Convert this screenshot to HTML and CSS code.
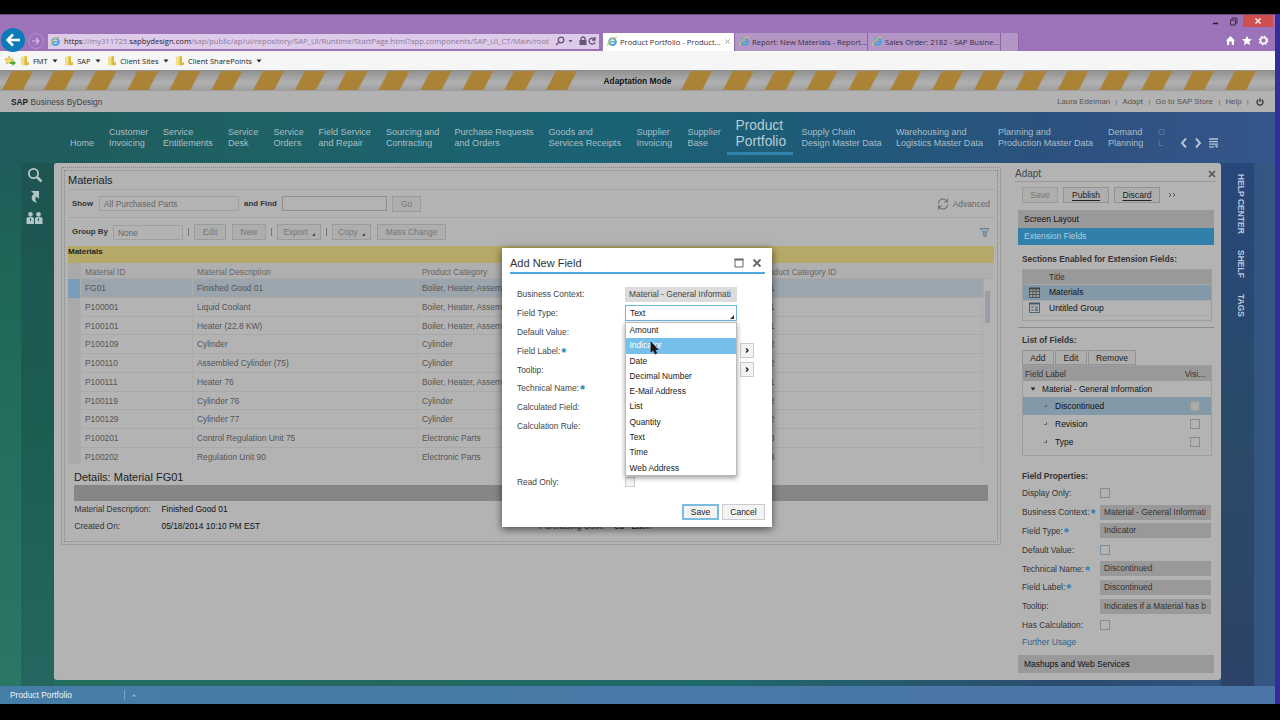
FILE: index.html
```html
<!DOCTYPE html>
<html lang="en">
<head>
  <meta charset="UTF-8">
  <title>Product Portfolio - Product Data - SAP Business ByDesign</title>
  <link rel="stylesheet" href="styles.css">
</head>
<body>
  <svg class="defs" width="0" height="0">
    <symbol id="ie" viewBox="0 0 12 12">
      <circle cx="6" cy="6.2" r="3.7" fill="none" stroke="#45a3dc" stroke-width="2"/>
      <path d="M3 6.4h7" stroke="#45a3dc" stroke-width="1.5"/>
      <path d="M1.2 10.8C-.5 8 6 .6 11 1.2" fill="none" stroke="#d9c84b" stroke-width="1.2"/>
    </symbol>
    <symbol id="folder" viewBox="0 0 10 11">
      <path d="M1 2l4-1v9l-4 .5z" fill="#f3df86"/>
      <path d="M4.500 1.500L7 1v6l2 .5V10l-4.500.500z" fill="#dcb93f"/>
    </symbol>
    <symbol id="down" viewBox="0 0 6 4"><path d="M.5.5h5L3 3.500z" fill="#222"/></symbol>
  </svg>

  <div class="window">
    <div class="titlebar">
      <svg class="win-min" width="6" height="9"><path d="M0 7.500h5" stroke="#222" stroke-width="1.500"/></svg>
      <svg class="win-max" width="8" height="9"><path d="M.5 3h5v5h-5zM2 3V1h5v5H5.500" fill="none" stroke="#3c2b49"/></svg>
      <span class="win-close"><svg width="6" height="6"><path d="M.5.5l5 5m0-5l-5 5" stroke="#fff" stroke-width="1.300"/></svg></span>
    </div>
    <div class="address-row">
      <span class="back"><svg width="16" height="14"><path d="M15 7H3M8 1.500L2.500 7 8 12.500" fill="none" stroke="#fff" stroke-width="2.500"/></svg></span>
      <span class="forward"><svg width="8" height="8"><path d="M0 4h7M4 1l3 3-3 3" fill="none" stroke="#d8bfe8" stroke-width="1.200"/></svg></span>
      <div class="url">
        <svg width="11" height="11"><use href="#ie"/></svg>
        <span class="url-text"><b>https</b>://my311725.<b>sapbydesign.com</b>/sap/public/ap/ui/repository/SAP_UI/Runtime/StartPage.html?app.components/SAP_UI_CT/Main/root</span>
        <svg class="url-icons" width="42" height="10">
          <g fill="none" stroke="#675476" stroke-width="1.300">
            <circle cx="6" cy="4" r="2.800"/><path d="M4 6L1 9"/>
            <path d="M39.500 3.200A3 3 0 1 0 40 6M40 1v3h-3"/>
            <path d="M26 4V3a2 2 0 0 1 4 0v1"/>
          </g>
          <path d="M13.500 4h4l-2 2.500zM24.500 4h7v5h-7z" fill="#675476"/>
        </svg>
      </div>
      <div class="tab active"><svg width="11" height="11"><use href="#ie"/></svg><span>Product Portfolio - Product...</span><svg class="tab-x" width="5" height="5"><path d="M.5.5l4 4m0-4l-4 4" stroke="#999"/></svg></div>
      <div class="tab report"><svg width="11" height="11"><use href="#ie"/></svg><span>Report: New Materials - Report...</span></div>
      <div class="tab order"><svg width="11" height="11"><use href="#ie"/></svg><span>Sales Order: 2182 - SAP Busine...</span></div>
      <div class="tab new-tab"></div>
      <svg class="chrome-tools" width="44" height="11">
        <path d="M0 5.500L4.500 1 9 5.500H8V10H5.800V6.500H3.200V10H1V5.500z" fill="#fff"/>
        <path d="M21 .8l1.500 3.200 3.500.3-2.700 2.300.9 3.600L21 8.300l-3.200 1.900.9-3.600L16 4.300l3.500-.3z" fill="#fff"/>
        <circle cx="37.500" cy="5.500" r="3" fill="none" stroke="#fff" stroke-width="1.600"/>
        <circle cx="37.500" cy="5.500" r="4.200" fill="none" stroke="#fff" stroke-width="1.300" stroke-dasharray="1.650 1.650"/>
      </svg>
    </div>
    <div class="favorites">
      <svg class="fav-star" width="12" height="11"><path d="M5 1l1.200 2.800 3 .3-2.300 2 .7 3L5 7.600 2.200 9.100l.8-3-2.300-2 3-.3z" fill="#f3dc62" stroke="#c8a12e" stroke-width=".6"/><path d="M6 7h2.500V5L12 8l-3.500 3V9H6z" fill="#55a62e"/></svg>
      <svg width="10" height="11"><use href="#folder"/></svg><span>FMT</span><svg class="caret" width="6" height="4"><use href="#down"/></svg>
      <svg width="10" height="11"><use href="#folder"/></svg><span>SAP</span><svg class="caret" width="6" height="4"><use href="#down"/></svg>
      <svg width="10" height="11"><use href="#folder"/></svg><span>Client Sites</span><svg class="caret" width="6" height="4"><use href="#down"/></svg>
      <svg width="10" height="11"><use href="#folder"/></svg><span>Client SharePoints</span><svg class="caret" width="6" height="4"><use href="#down"/></svg>
    </div>

    <div class="app">
      <div class="adaptation">
        <svg width="588" height="19">
          <defs><pattern id="stripe" width="41.850" height="19" patternUnits="userSpaceOnUse"><path d="M2 19L12 0h21L23 19z" fill="#aa8337"/></pattern></defs>
          <rect width="588" height="19" fill="url(#stripe)"/>
        </svg>
        <b>Adaptation Mode</b>
        <svg width="596" height="19"><rect width="580" height="19" fill="url(#stripe)"/></svg>
      </div>
      <div class="header">
        <span class="brand"><b>SAP</b> Business ByDesign</span>
        <span class="links"><span>Laura Edelman</span><i>|</i><span>Adapt</span><i>|</i><span>Go to SAP Store</span><i>|</i><span>Help</span><i>|</i></span>
        <svg width="8" height="8"><path d="M2.300 1.700a3 3 0 1 0 3.400 0M4 .3V4" fill="none" stroke="#333" stroke-width="1.300"/></svg>
      </div>
      <div class="nav">
        <span>Home</span>
        <span>Customer<br>Invoicing</span>
        <span>Service<br>Entitlements</span>
        <span>Service<br>Desk</span>
        <span>Service<br>Orders</span>
        <span>Field Service<br>and Repair</span>
        <span>Sourcing and<br>Contracting</span>
        <span>Purchase Requests<br>and Orders</span>
        <span>Goods and<br>Services Receipts</span>
        <span>Supplier<br>Invoicing</span>
        <span>Supplier<br>Base</span>
        <span class="current">Product<br>Portfolio</span>
        <span>Supply Chain<br>Design Master Data</span>
        <span>Warehousing and<br>Logistics Master Data</span>
        <span>Planning and<br>Production Master Data</span>
        <span>Demand<br>Planning</span>
        <span class="cut">O<br>L</span>
        <svg width="40" height="12"><path d="M6 1.500L2 6l4 4.500M16 1.500L20 6l-4 4.500" fill="none" stroke="#b5c3d3" stroke-width="2"/><path d="M29 2h9M29 4.600h9M29 7.200h9M29 9.800h5" stroke="#b5c3d3" stroke-width="1.300"/><path d="M34.500 8.500h4l-2 2.500z" fill="#b5c3d3"/></svg>
      </div>

      <div class="body">
        <div class="left-rail">
          <svg width="16" height="16"><circle cx="6.500" cy="6.500" r="4.600" fill="none" stroke="#b3c6c6" stroke-width="1.800"/><path d="M10 10l4.500 4.500" stroke="#b3c6c6" stroke-width="2.500"/></svg>
          <svg width="12" height="14"><path d="M2 1h8v8L7.500 6.500Q5 9 8 13 1 11 3 6 4 4.500 5 4z" fill="#b3c6c6"/></svg>
          <svg width="17" height="14"><g fill="#b3c6c6"><circle cx="4.500" cy="3.200" r="2.300"/><circle cx="12.500" cy="3.200" r="2.300"/><path d="M.5 7Q4.500 4.500 8 7v6H.500zM9 7q4-2.500 7.500 0v6H9z"/></g><path d="M4.500 7v3M12.500 7v3" stroke="#245f5a"/></svg>
        </div>

        <div class="panel">
          <div class="main">
            <div class="frame"><div class="frame-inner">
              <h1>Materials</h1>
              <div class="find-row">
                <b class="show">Show</b><span class="input wide">All Purchased Parts</span>
                <b class="find">and Find</b><span class="input search"></span><span class="btn off go">Go</span>
                <span class="advanced"><svg width="12" height="12"><path d="M1.500 5.500A4.500 4.500 0 0 1 10 3.500M10.500 6.500A4.500 4.500 0 0 1 2 8.500M10.500.5v3.500H7M1.500 11.500V8H5" fill="none" stroke="#737373" stroke-width="1.200"/></svg>Advanced</span>
              </div>
              <div class="toolbar">
                <b>Group By</b><span class="input group">None</span><i></i>
                <span class="btn off edit">Edit</span><span class="btn off new">New</span><i></i>
                <span class="btn off export">Export<em></em></span><i></i>
                <span class="btn off copy">Copy<em></em></span><span class="btn off mass">Mass Change</span>
                <svg class="filter" width="11" height="11"><path d="M1 1.500h9L7 6v4L4.500 8.500V6z" fill="#8496a5" stroke="#68808f"/><path d="M2 3h7" stroke="#a9bac5"/></svg>
              </div>
              <div class="section-bar">Materials</div>
              <div class="table">
                <div class="tr th"><span></span><span>Material ID</span><span>Material Description</span><span>Product Category</span><span>Product Category ID</span></div>
                <div class="tr selected"><span></span><span>FG01</span><span>Finished Good 01</span><span>Boiler, Heater, Assemblies</span><span>101</span></div>
                <div class="tr"><span></span><span>P100001</span><span>Liquid Coolant</span><span>Boiler, Heater, Assemblies</span><span>101</span></div>
                <div class="tr"><span></span><span>P100101</span><span>Heater (22.8 KW)</span><span>Boiler, Heater, Assemblies</span><span>101</span></div>
                <div class="tr"><span></span><span>P100109</span><span>Cylinder</span><span>Cylinder</span><span>102</span></div>
                <div class="tr"><span></span><span>P100110</span><span>Assembled Cylinder (75)</span><span>Cylinder</span><span>102</span></div>
                <div class="tr"><span></span><span>P100111</span><span>Heater 76</span><span>Boiler, Heater, Assemblies</span><span>101</span></div>
                <div class="tr"><span></span><span>P100119</span><span>Cylinder 76</span><span>Cylinder</span><span>102</span></div>
                <div class="tr"><span></span><span>P100129</span><span>Cylinder 77</span><span>Cylinder</span><span>102</span></div>
                <div class="tr"><span></span><span>P100201</span><span>Control Regulation Unit 75</span><span>Electronic Parts</span><span>103</span></div>
                <div class="tr"><span></span><span>P100202</span><span>Regulation Unit 90</span><span>Electronic Parts</span><span>103</span></div>
                <div class="scroll"></div>
              </div>
              <h1 class="details-title">Details: Material FG01</h1>
              <div class="details-bar"></div>
              <div class="details">
                <span>Material Description:</span><span class="value">Finished Good 01</span><span></span><span></span>
                <span>Created On:</span><span class="value">05/18/2014 10:10 PM EST</span><span>Purchasing UoM:</span><span class="value">ea - Each</span>
              </div>
            </div></div>
          </div>

          <div class="adapt">
            <div class="adapt-head"><span>Adapt</span><svg width="8" height="8"><path d="M1 1l6 6m0-6L1 7" stroke="#555" stroke-width="1.600"/></svg></div>
            <div class="adapt-buttons"><span class="btn off">Save</span><span class="btn"><u>Publish</u></span><span class="btn"><u>Discard</u></span><svg width="9" height="7"><path d="M1 1l2 2-2 2M5 1l2 2-2 2" fill="none" stroke="#555"/></svg></div>
            <div class="bar">Screen Layout</div>
            <div class="bar bar-on">Extension Fields</div>
            <h2 class="sections-title">Sections Enabled for Extension Fields:</h2>
            <div class="sections">
              <div class="sec-head"><span></span><span>Title</span></div>
              <div class="sec-on"><span><svg width="11" height="11"><path d="M.5 1.500h10v9H.500zM.500 4.500h10M.500 7.500h10M4 3v7.500M7 3v7.500" fill="#a2a2a2" stroke="#4b5258"/><path d="M0 1.500h11" stroke="#444" stroke-width="2"/></svg></span><span>Materials</span></div>
              <div><span><svg width="11" height="11"><path d="M.5 1.500h10v9H.500z" fill="none" stroke="#4b6472"/><path d="M0 1.500h11" stroke="#3f5966" stroke-width="2"/><path d="M2 5h3M2 8h3M6 5h3M6 7h3M6 8.500h3" stroke="#356985"/></svg></span><span>Untitled Group</span></div>
            </div>
            <div class="rule"></div>
            <h2 class="list-title">List of Fields:</h2>
            <div class="field-buttons"><span class="btn">Add</span><span class="btn">Edit</span><span class="btn">Remove</span></div>
            <div class="fields">
              <div class="f-head"><span>Field Label</span><span class="visi">Visi...</span></div>
              <div class="f-group"><svg width="6" height="4"><use href="#down"/></svg>Material - General Information</div>
              <div class="f-row f-on"><em></em><span>Discontinued</span><i class="check"></i></div>
              <div class="f-row"><em></em><span>Revision</span><i class="check"></i></div>
              <div class="f-row"><em></em><span>Type</span><i class="check"></i></div>
            </div>
            <h2 class="props-title">Field Properties:</h2>
            <div class="props">
              <span>Display Only:</span><i class="check"></i>
              <span>Business Context:<sup>*</sup></span><span class="ro">Material - General Informati</span>
              <span>Field Type:<sup>*</sup></span><span class="ro">Indicator</span>
              <span>Default Value:</span><i class="check blue"></i>
              <span>Technical Name:<sup>*</sup></span><span class="ro">Discontinued</span>
              <span>Field Label:<sup>*</sup></span><span class="ro">Discontinued</span>
              <span>Tooltip:</span><span class="ro">Indicates if a Material has b</span>
              <span>Has Calculation:</span><i class="check"></i>
            </div>
            <a class="usage">Further Usage</a>
            <div class="bar mashups">Mashups and Web Services</div>
          </div>
        </div>

        <div class="right-rail"><span>HELP CENTER</span><span>SHELF</span><span>TAGS</span></div>
      </div>
      <div class="taskbar"><span>Product Portfolio</span><svg width="6" height="4"><path d="M.5 3.500L3 1l2.500 2.500z" fill="#8fb0cd"/></svg></div>
    </div>
  </div>

  <div class="dialog">
    <div class="dialog-head">
      <span>Add New Field</span>
      <svg width="10" height="10"><path d="M1 1.500h8v7.500H1z" fill="none" stroke="#666"/><path d="M.5 1.500h9" stroke="#666" stroke-width="2"/></svg>
      <svg width="10" height="10"><path d="M1.500 1.500l7 7m0-7l-7 7" stroke="#666" stroke-width="1.800"/></svg>
    </div>
    <div class="form">
      <span>Business Context:</span><span class="ro">Material - General Informati</span><span></span>
      <span>Field Type:</span><span class="select">Text<em></em></span><span></span>
      <span>Default Value:</span><span></span><span></span>
      <span>Field Label:<sup>*</sup></span><span></span><span class="more"><svg width="5" height="7"><path d="M1 1.500l2 2-2 2" fill="none" stroke="#222" stroke-width="1.400"/></svg></span>
      <span>Tooltip:</span><span></span><span class="more"><svg width="5" height="7"><path d="M1 1.500l2 2-2 2" fill="none" stroke="#222" stroke-width="1.400"/></svg></span>
      <span>Technical Name:<sup>*</sup></span><span></span><span></span>
      <span>Calculated Field:</span><span></span><span></span>
      <span>Calculation Rule:</span><span></span><span></span>
      <span></span><span></span><span></span>
      <span></span><span></span><span></span>
      <span>Read Only:</span><i class="check light"></i><span></span>
    </div>
    <div class="actions"><span class="btn save">Save</span><span class="btn cancel">Cancel</span></div>
    <ul class="options">
      <li>Amount</li>
      <li class="hover">Indicator</li>
      <li>Date</li>
      <li>Decimal Number</li>
      <li>E-Mail Address</li>
      <li>List</li>
      <li>Quantity</li>
      <li>Text</li>
      <li>Time</li>
      <li>Web Address</li>
    </ul>
    <svg class="cursor" width="9" height="14"><path d="M1 1v10l2.300-2 1.700 4 1.700-.7L5 8.500h3z" fill="#2b0d12" stroke="#111" stroke-width=".7"/></svg>
  </div>
</body>
</html>
```
FILE: styles.css
```css
* {
  box-sizing: border-box;
}
body {
  margin: 0;
  padding: 14px 0 16px;
  height: 720px;
  overflow: hidden;
  background: #000;
  font-family: "Liberation Sans", Arial, sans-serif;
  font-size: 8.4px;
  line-height: 10px;
  color: #222;
  white-space: nowrap;
}
svg {
  flex: none;
  display: block;
}
.defs {
  position: absolute;
}
i, em {
  font-style: normal;
}
h1, h2 {
  margin: 0;
}
.window {
  height: 690px;
  border-right: 5px solid #342b9c;
}

/* browser chrome */
.titlebar, .address-row {
  display: flex;
  background: #9c72b9;
}
.titlebar {
  height: 18px;
  border-top: 1px solid #68507a;
}
.win-min {
  margin-left: 1213px;
  margin-top: 1px;
}
.win-max {
  margin: 2px 0 0 11px;
}
.win-close {
  display: flex;
  align-items: center;
  justify-content: center;
  width: 30px;
  height: 12px;
  margin-left: 5px;
  background: #cf4f50;
}
.address-row {
  height: 19px;
  align-items: center;
  font-family: "Open Sans", "Noto Sans", sans-serif;
  font-size: 7.6px;
  color: #3b2c46;
}
.back, .forward {
  display: flex;
  align-items: center;
  justify-content: center;
  border-radius: 50%;
  flex: none;
}
.back {
  width: 24px;
  height: 24px;
  margin-left: 1px;
  margin-top: -3px;
  background: #0d7ab9;
}
.forward {
  width: 16px;
  height: 16px;
  margin: -2px 4px 0 3px;
  border: 1px solid #b58ecf;
}
.url {
  display: flex;
  align-items: center;
  width: 551px;
  height: 15px;
  flex: none;
  padding-left: 2px;
  margin-top: -1px;
  background: #decbe9;
}
.url-text {
  width: 491px;
  margin-left: 3px;
  color: #8d7a9b;
  font-size: 7.65px;
}
.url-text b {
  font-weight: 500;
  color: #2a2030;
}
.tab {
  display: flex;
  align-items: center;
  gap: 2px;
  height: 18px;
  padding-left: 4px;
  background: #b496c6;
  border-right: 1px solid #8b68a3;
  overflow: hidden;
  flex: none;
}
.tab.active {
  width: 132px;
  margin-left: 4px;
  background: #fff;
}
.tab-x {
  margin-left: auto;
  margin-right: 4px;
}
.report, .order {
  width: 133px;
}
.new-tab {
  width: 18px;
}
.chrome-tools {
  margin-left: auto;
  margin-right: 5px;
  margin-top: -3px;
}
.favorites {
  display: flex;
  align-items: center;
  height: 19px;
  background: #f6f6f6;
  font-family: "Open Sans", "Noto Sans", sans-serif;
  font-size: 7.5px;
  padding-left: 4px;
}
.favorites span {
  margin-left: 3px;
}
.favorites .fav-star {
  margin-right: 4px;
}
.favorites .caret {
  margin: 0 6.5px 0 4px;
}

/* application shell */
.app {
  height: 634px;
  background:
    radial-gradient(ellipse 600px 200px at 620px 40px, rgba(20, 100, 118, .55), transparent),
    linear-gradient(90deg, #1f5a5c 0, #22605f 20%, #1f6171 45%, #26557a 65%, #2f4e80 82%, #35568a 100%);
}
.adaptation {
  display: flex;
  align-items: center;
  height: 21px;
  background: linear-gradient(#8f8f8f, #b1b1b1 60%, #9c9c9c);
  font-size: 8.4px;
  color: #111;
}
.adaptation b {
  width: 93px;
  padding-left: 15.5px;
}
.adaptation svg:last-child {
  margin-left: -2px;
}
.header {
  display: flex;
  align-items: center;
  height: 21px;
  padding: 0 11px;
  background: #b2b2b2;
  color: #444;
}
.brand {
  font-size: 8.35px;
}
.brand b {
  color: #222;
}
.links {
  display: flex;
  margin-left: auto;
  margin-right: 2px;
  font-size: 7.8px;
  color: #555;
}
.links i {
  width: 12.5px;
  text-align: center;
  font-size: 6px;
}
.nav {
  display: grid;
  grid-template-columns: 39px 54px 65px 45.5px 45px 67.5px 68.500px 94px 88px 51px 39.500px 74.500px 94.500px 102px 110px 50px 21.500px 40px;
  align-items: end;
  height: 51px;
  padding-left: 70px;
  padding-bottom: 14px;
  font-size: 9.05px;
  line-height: 10.800px;
  color: #a9bfc6;
}
.nav .current {
  width: 66px;
  padding: 0 0 1px 8.500px;
  margin-bottom: -6px;
  border-bottom: 3px solid #2f83ad;
  font-size: 13.8px;
  line-height: 16.600px;
  color: #b8ccd6;
}
.nav .cut {
  width: 7px;
  overflow: hidden;
  opacity: .35;
}
.body {
  display: flex;
  height: 523px;
  padding-left: 21px;
  background:
    linear-gradient(#1f5c5b, #1f6857 25%, #257060 60%, #2a7767) 0 0 / 21px 100% no-repeat,
    linear-gradient(90deg, #246f60 0, #23685f 30%, #1f6a6a 55%, #2c4a70 85%, #345784 100%);
}
.left-rail {
  display: flex;
  flex-direction: column;
  align-items: center;
  width: 33px;
  padding: 4px 6px 0 0;
  gap: 7px;
  background: linear-gradient(#1e5452, #1c5d52 50%, #256760);
}
.right-rail {
  display: flex;
  flex-direction: column;
  align-items: flex-start;
  width: 33px;
  gap: 16px;
  padding: 11px 0 0 15px;
  background: linear-gradient(#28477a, #2a4a68 55%, #2d4268);
  font-size: 8.5px;
  font-weight: bold;
  color: #b7c5d8;
}
.right-rail span {
  writing-mode: vertical-rl;
}
.taskbar {
  display: flex;
  align-items: center;
  height: 18px;
  padding-left: 10px;
  background: linear-gradient(90deg, #467da6, #4b75a6);
  color: #eef4f8;
}
.taskbar span {
  width: 115px;
  border-right: 1px solid #7aa3c4;
}
.taskbar svg {
  margin-left: 6px;
}

/* content */
.panel {
  display: flex;
  width: 1167px;
  height: 517px;
  background: #b3b3b3;
  border-radius: 3px;
}
.main {
  width: 958px;
  padding: 4px 0 0 7px;
}
.frame {
  width: 940px;
  height: 378px;
  padding: 2px;
  border: 1px dotted #868686;
  border-radius: 2px;
}
.frame-inner {
  height: 372px;
  padding: 0 3px;
  border: 1px dotted #868686;
}
h1 {
  height: 19px;
  font-size: 11px;
  font-weight: normal;
  line-height: 19px;
  border-bottom: 1px solid #a4a4a4;
}
.input {
  height: 15px;
  padding: 0 4px;
  line-height: 14px;
  border: 1px solid #a0a0a0;
  color: #666;
}
.btn {
  display: inline-flex;
  align-items: center;
  justify-content: center;
  height: 16px;
  background: #aeaeae;
  border: 1px solid #939393;
  color: #222;
}
.btn.off {
  color: #777;
  border-color: #9b9b9b;
}
.find-row, .toolbar {
  display: flex;
  align-items: center;
  padding-left: 4px;
}
.find-row b, .toolbar b {
  font-size: 7.9px;
  color: #333;
}
.find-row {
  height: 28px;
  border-bottom: 1px solid #a6a6a6;
}
.show {
  width: 27px;
}
.wide {
  width: 140px;
}
.find {
  margin-left: 5px;
  width: 38px;
}
.search {
  width: 105px;
  border-color: #8f8f8f;
}
.go {
  width: 29px;
  margin-left: 5px;
}
.advanced {
  display: flex;
  align-items: center;
  gap: 4px;
  margin-left: auto;
  margin-right: 4px;
  color: #666;
}
.toolbar {
  height: 28px;
}
.toolbar b {
  width: 41px;
}
.group {
  width: 70px;
}
.toolbar i {
  width: 1px;
  height: 8px;
  margin: 0 5px;
  background: #777;
}
.toolbar .edit {
  width: 32px;
}
.toolbar .new {
  width: 34px;
  margin-left: 6px;
}
.toolbar .export {
  width: 44px;
}
.toolbar .copy {
  width: 39px;
}
.toolbar .mass {
  width: 69px;
  margin-left: 6px;
}
.btn em {
  align-self: flex-end;
  width: 0;
  height: 0;
  margin: 0 0 3px 4px;
  border-left: 3px solid transparent;
  border-bottom: 3px solid #444;
}
.filter {
  margin-left: auto;
  margin-right: 4px;
}
.section-bar {
  height: 17px;
  line-height: 12px;
  font-weight: bold;
  font-size: 8px;
  background: #b4a967;
}
.table {
  position: relative;
  height: 201px;
  overflow: hidden;
  color: #555;
}
.tr {
  display: grid;
  grid-template-columns: 13px 112px 225px 338.500px 226.500px;
  width: 916px;
  height: 18.75px;
  line-height: 19px;
  border-bottom: 1px solid #a9a9a9;
}
.tr span {
  padding-left: 4px;
  border-right: 1px solid #adadad;
}
.tr span:first-child {
  background: #a9a9a9;
}
.tr span:nth-child(4) {
  border: 0;
}
.th {
  height: 16px;
  line-height: 18px;
  width: 928px;
  background: #afafaf;
  color: #666;
}
.th span {
  background: none;
  border: 0;
}
.selected {
  background: #9ba5ae;
}
.selected span:first-child {
  background: #779db8;
}
.scroll {
  position: absolute;
  right: 4px;
  top: 28px;
  width: 5px;
  height: 32px;
  background: #9d9ca6;
}
.details-title {
  height: 21px;
  line-height: 26px;
  border: 0;
  padding-left: 6px;
}
.details-bar {
  height: 16px;
  margin: 0 6px;
  background: #868686;
}
.details {
  display: grid;
  grid-template-columns: 87px 378px 75px 1fr;
  grid-auto-rows: 16.500px;
  align-items: center;
  padding-left: 6.5px;
  color: #333;
}
.details .value {
  color: #111;
}

/* adapt panel */
.adapt {
  width: 209px;
  padding: 2px 7px 0 6px;
}
.adapt h2 {
  margin-left: 4px;
  font-size: 8.4px;
  color: #333;
}
.adapt-head {
  display: flex;
  align-items: center;
  justify-content: space-between;
  height: 17px;
  padding: 1px 0 0;
  margin: 0 -2px 0 -3px;
  font-size: 10px;
  color: #444;
  border-bottom: 1px solid #999;
}
.adapt-buttons {
  display: flex;
  align-items: center;
  gap: 5px;
  padding: 5px 0 7px 4px;
}
.adapt-buttons .btn {
  width: 46px;
  font-size: 8.6px;
}
.adapt-buttons .btn.off {
  width: 36px;
}
.adapt-buttons u {
  text-underline-offset: 2px;
}
.adapt-buttons svg {
  margin-left: 3px;
}
.bar {
  height: 18px;
  padding-left: 6px;
  line-height: 18px;
  font-size: 8.5px;
  background: #999;
  color: #111;
}
.bar-on {
  height: 17px;
  line-height: 17px;
  background: #3180ab;
  color: #b5cedb;
}
.sections-title {
  margin-top: 9px;
}
.sections {
  width: 190px;
  height: 52px;
  margin: 5px 0 0 4px;
  border: 1px solid #9e9e9e;
  font-size: 8.5px;
}
.sections div {
  display: flex;
  align-items: center;
  height: 15.300px;
  border-bottom: 1px solid #a9a9a9;
  color: #111;
}
.sections span:first-child {
  width: 26px;
  padding-left: 6px;
}
.sections .sec-head {
  background: #999;
  color: #333;
}
.sections .sec-on, .fields .f-on {
  background: #8399a8;
}
.rule {
  margin-top: 6px;
  border-top: 1px solid #8a8a8a;
}
.list-title {
  margin-top: 7px;
}
.field-buttons {
  display: flex;
  margin: 5px 0 0 4px;
  gap: 1px;
}
.field-buttons .btn {
  width: 32px;
  height: 15px;
  font-size: 8.600px;
}
.field-buttons .btn:last-child {
  width: 48px;
}
.fields {
  width: 190px;
  height: 91px;
  margin-left: 4px;
  border: 1px solid #9e9e9e;
  font-size: 8.500px;
  color: #111;
}
.f-head, .f-group, .f-row {
  display: flex;
  align-items: center;
}
.f-head {
  justify-content: space-between;
  height: 15px;
  padding: 0 6px 0 2px;
  background: #999;
  color: #333;
  font-size: 8.400px;
}
.f-group {
  height: 15.500px;
  padding-left: 7px;
  gap: 6px;
  font-size: 8.300px;
}
.f-row {
  height: 18.200px;
  padding: 0 11px 0 21px;
}
.f-row em {
  width: 3px;
  height: 3px;
  margin-right: 8px;
  border-right: 1px solid #666;
  border-bottom: 1px solid #666;
}
.f-row span {
  flex: 1;
}
.check {
  width: 10px;
  height: 10px;
  border: 1px solid #8b8b8b;
}
.f-on .check {
  background: #aaa;
  border-color: #999;
}
.check.blue {
  border-color: #7390a5;
}
.check.light {
  background: #f4f4f4;
  border-color: #ccc;
}
.props-title {
  margin-top: 15px;
}
.props {
  display: grid;
  grid-template-columns: 78px 111px;
  grid-auto-rows: 18.800px;
  align-items: center;
  margin: 3px 0 0 4px;
  color: #333;
}
sup {
  display: inline-block;
  margin-left: 1px;
  font-size: 13px;
  font-weight: bold;
  line-height: 0;
  vertical-align: -3px;
  color: #2f83b5;
}
.ro {
  height: 15px;
  padding: 0 4px;
  line-height: 15px;
  background: #999;
  color: #333;
  overflow: hidden;
}
.usage {
  display: block;
  margin: 3px 0 0 4px;
  font-size: 8.500px;
  color: #2b6592;
}
.mashups {
  margin-top: 8px;
}

/* add field dialog */
.dialog {
  position: absolute;
  left: 502px;
  top: 248px;
  width: 270px;
  height: 279px;
  padding: 6px 7px 0 8px;
  background: #fff;
  box-shadow: 0 2px 8px rgba(0, 0, 0, .6);
}
.dialog-head {
  display: flex;
  align-items: center;
  height: 20px;
  gap: 8px;
  font-size: 11px;
  color: #333;
  border-bottom: 2px solid #52a7d9;
}
.dialog-head span {
  flex: 1;
}
.dialog-head svg:last-child {
  margin-right: 3px;
}
.form {
  display: grid;
  grid-template-columns: 108px 112px 1fr;
  grid-auto-rows: 18.800px;
  align-items: center;
  margin: 11px 0 0 7px;
  color: #444;
}
.form .ro {
  background: #dcdcdc;
  color: #444;
}
.select {
  display: flex;
  justify-content: space-between;
  height: 16px;
  padding: 2px 2px 0 4px;
  border: 1px solid #6fb6df;
  color: #222;
}
.select em {
  width: 0;
  height: 0;
  margin-top: 7px;
  border-left: 4px solid transparent;
  border-bottom: 4px solid #333;
}
.more {
  display: flex;
  align-items: center;
  justify-content: center;
  width: 14px;
  height: 15px;
  margin-left: 3px;
  background: #f2f2f2;
  border: 1px solid #ccc;
}
.actions {
  display: flex;
  justify-content: flex-end;
  gap: 3px;
  margin-top: 12px;
}
.actions .btn {
  width: 43px;
  background: #f3f3f3;
  border-color: #ccc;
  font-size: 8.500px;
}
.actions .save {
  width: 37px;
  border: 2px solid #7bbce3;
}
.options {
  position: absolute;
  left: 123px;
  top: 74px;
  width: 112px;
  height: 154px;
  margin: 0;
  padding: 0;
  list-style: none;
  background: #fff;
  border: 1px solid #bbb;
  box-shadow: 0 2px 5px rgba(0, 0, 0, .4);
}
.options li {
  height: 15.300px;
  padding-left: 3.500px;
  line-height: 14.5px;
}
.options .hover {
  background: #75bfeb;
  color: #fff;
}
.cursor {
  position: absolute;
  left: 148px;
  top: 93px;
}
```
